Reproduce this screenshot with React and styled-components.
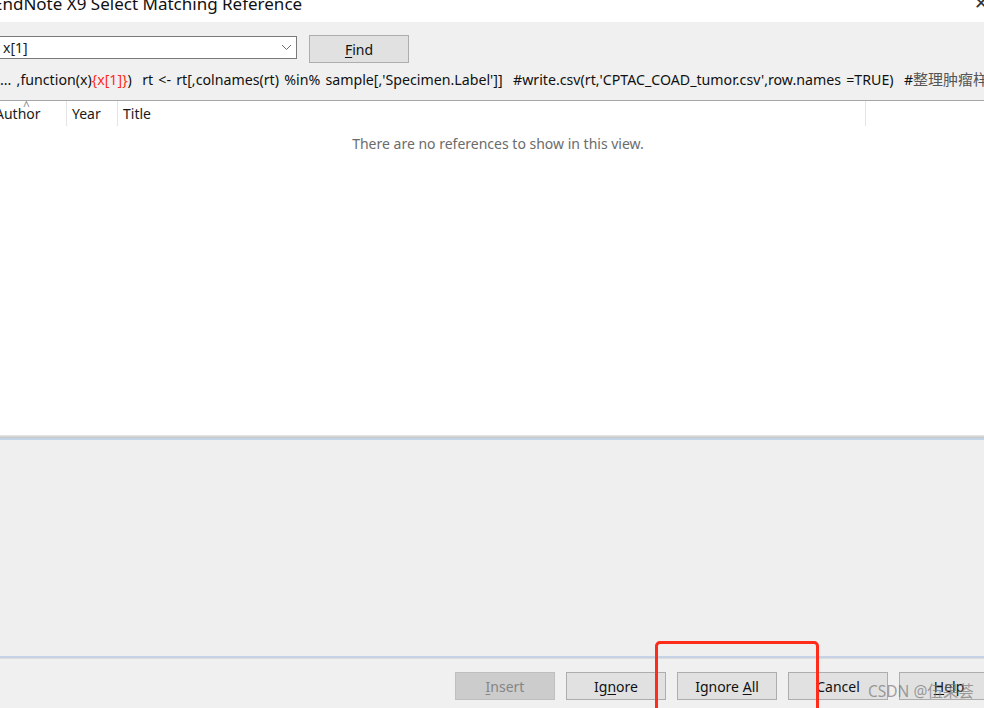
import React from "react";
import styled, { createGlobalStyle } from "styled-components";

const GlobalStyle = createGlobalStyle`
  html, body {
    margin: 0;
    padding: 0;
    background: #f0f0f0;
  }
  body {
    font-family: "Noto Sans", "Open Sans", sans-serif;
    color: #1a1a1a;
  }
`;

const Dialog = styled.div`
  position: relative;
  width: 984px;
  height: 708px;
  overflow: hidden;
  display: flex;
  flex-direction: column;
  background: #f0f0f0;
`;

const TitleBar = styled.div`
  height: 22px;
  flex: none;
  background: #fff;
  display: flex;
  justify-content: space-between;
  overflow: hidden;
`;

const TitleText = styled.div`
  font-size: 17px;
  line-height: 17px;
  margin-top: -5px;
  margin-left: -7px;
  color: #111;
  white-space: nowrap;
`;

const CloseGlyph = styled.div`
  font-size: 17px;
  line-height: 17px;
  margin-top: -6px;
  margin-right: -4px;
  color: #333;
`;

const Toolbar = styled.div`
  height: 78px;
  flex: none;
  display: flex;
  flex-direction: column;
`;

const SearchRow = styled.div`
  display: flex;
  align-items: flex-start;
  gap: 12px;
  padding-top: 13px;
  margin-left: -1px;
`;

const Combo = styled.div`
  width: 298px;
  height: 23px;
  margin-top: 1px;
  box-sizing: border-box;
  background: #fff;
  border: 1px solid #7a7a7a;
  display: flex;
  align-items: center;
  justify-content: space-between;
  padding: 0 4px 0 3px;
  font-size: 14px;
`;

const Button = styled.div`
  width: 100px;
  height: 28px;
  box-sizing: border-box;
  flex: none;
  display: flex;
  align-items: center;
  justify-content: center;
  font-size: 14px;
  background: ${(p) => (p.disabled ? "#cccccc" : "#e1e1e1")};
  border: 1px solid ${(p) => (p.disabled ? "#bfbfbf" : "#adadad")};
  color: ${(p) => (p.disabled ? "#858585" : "#111")};
  u {
    text-decoration-thickness: 1px;
    text-underline-offset: 2px;
  }
`;

const CodeLine = styled.div`
  margin-top: 6px;
  font-size: 14.2px;
  line-height: 20px;
  white-space: nowrap;
  color: #111;
  word-spacing: 1.5px;
`;

const Red = styled.span`
  color: #ff2a1a;
`;

const Cjk = styled.span`
  font-family: "Noto Sans CJK SC", sans-serif;
  color: #555;
  font-size: 15px;
`;

const ListArea = styled.div`
  height: 334px;
  flex: none;
  background: #fff;
  border-top: 1px solid #a6a6a6;
  display: flex;
  flex-direction: column;
`;

const HeaderRow = styled.div`
  height: 25px;
  display: flex;
  font-size: 14px;
  margin-left: -8px;
`;

const HeaderCell = styled.div`
  position: relative;
  width: ${(p) => p.w}px;
  flex: ${(p) => (p.grow ? 1 : "none")};
  box-sizing: border-box;
  padding-left: ${(p) => p.pl || 5}px;
  display: flex;
  align-items: center;
  border-right: ${(p) => (p.last ? "none" : "1px solid #e5e5e5")};
  color: #1a1a1a;
`;

const SortCaret = styled.span`
  position: absolute;
  left: 31px;
  top: -4px;
  font-size: 12px;
  color: #8a8a8a;
`;

const EmptyNote = styled.div`
  padding-top: 8px;
  padding-left: 12px;
  text-align: center;
  font-size: 14px;
  color: #6b6b6b;
`;

const Splitter = styled.div`
  height: 5px;
  flex: none;
  border-top: 1px solid #e2e2e2;
  background: linear-gradient(#d6d6d6 0 1px, #c9c9c9 1px 2px, #c4d2e6 2px 4px, #f0f0f0 4px);
  box-sizing: border-box;
`;

const Detail = styled.div`
  flex: 1;
  background: #efefef;
`;

const Footer = styled.div`
  height: 52px;
  flex: none;
  border-top: 2px solid #c6d3e6;
  box-sizing: border-box;
  display: flex;
  gap: 11px;
  padding: 14px 0 0 455px;
  box-shadow: inset 0 1px 0 #dcdcdc;
`;

const RedFrame = styled.div`
  position: absolute;
  left: 655px;
  top: 641px;
  width: 164px;
  height: 90px;
  box-sizing: border-box;
  border: 3px solid #ff2b1b;
  border-radius: 5px;
`;

const Watermark = styled.div`
  position: absolute;
  left: 868px;
  top: 679px;
  font-size: 15.5px;
  color: rgba(120, 120, 120, 0.7);
  white-space: nowrap;
  font-family: "Noto Sans", "Noto Sans CJK SC", sans-serif;
`;

const Chevron = () => (
  <svg width="11" height="7" viewBox="0 0 11 7">
    <path d="M1 1 L5.5 5.5 L10 1" fill="none" stroke="#6d6d6d" strokeWidth="1" />
  </svg>
);

export default function App() {
  return (
    <>
      <GlobalStyle />
      <Dialog>
        <TitleBar>
          <TitleText>EndNote X9 Select Matching Reference</TitleText>
          <CloseGlyph>✕</CloseGlyph>
        </TitleBar>
        <Toolbar>
          <SearchRow>
            <Combo>
              <span>x[1]</span>
              <Chevron />
            </Combo>
            <Button>
              <span><u>F</u>ind</span>
            </Button>
          </SearchRow>
          <CodeLine>
            ... ,function(x)<Red>{"{x[1]}"}</Red>)&nbsp; rt &lt;- rt[,colnames(rt) %in% sample[,'Specimen.Label']]&nbsp;
            #write.csv(rt,'CPTAC_COAD_tumor.csv',row.names =TRUE)&nbsp; #<Cjk>整理肿瘤样本</Cjk>
          </CodeLine>
        </Toolbar>
        <ListArea>
          <HeaderRow>
            <HeaderCell w={75} pl={3}>
              <SortCaret>^</SortCaret>
              Author
            </HeaderCell>
            <HeaderCell w={51}>Year</HeaderCell>
            <HeaderCell w={748}>Title</HeaderCell>
            <HeaderCell grow last />
          </HeaderRow>
          <EmptyNote>There are no references to show in this view.</EmptyNote>
        </ListArea>
        <Splitter />
        <Detail />
        <Footer>
          <Button disabled>
            <span><u>I</u>nsert</span>
          </Button>
          <Button>
            <span>Ig<u>n</u>ore</span>
          </Button>
          <Button>
            <span>Ignore <u>A</u>ll</span>
          </Button>
          <Button>Cancel</Button>
          <Button>
            <span><u>H</u>elp</span>
          </Button>
        </Footer>
        <RedFrame />
        <Watermark>CSDN @伍果荟</Watermark>
      </Dialog>
    </>
  );
}
